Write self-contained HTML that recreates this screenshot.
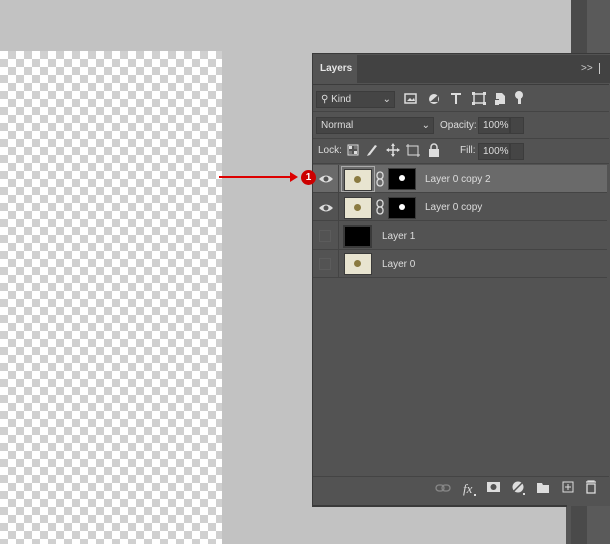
<!DOCTYPE html><html><head><style>
*{margin:0;padding:0;box-sizing:border-box}
body{width:610px;height:544px;background:#c2c2c2;position:relative;overflow:hidden;font-family:"Liberation Sans",sans-serif;font-size:10px;color:#ddd}
.a{position:absolute}
.chk{left:0;top:51px;width:222px;height:493px;background-color:#fff;background-image:linear-gradient(45deg,#d0d0d0 25%,transparent 25%,transparent 75%,#d0d0d0 75%),linear-gradient(45deg,#d0d0d0 25%,transparent 25%,transparent 75%,#d0d0d0 75%);background-size:16px 16px;background-position:0 0,8px 8px}
.panel{left:312px;top:53px;width:298px;height:453px;background:#535353;border-left:1px solid #3a3a3a;border-top:1px solid #3a3a3a}
.field{background:#454545;border:1px solid #3c3c3c;color:#ddd;height:17px;line-height:15px;padding-left:4px}
.row{left:313px;width:294px;height:28px;border-bottom:1px solid #444}
.thumb{width:28px;height:22px;border:1px solid #3a3a3a;background:#e8e4d0}
.thumb::after{content:"";position:absolute;left:9px;top:6px;width:7px;height:7px;border-radius:50%;background:#8a7a40}
.mask{width:28px;height:22px;border:1px solid #3a3a3a;background:#000}
.lbl{color:#ddd;font-size:10px}
</style></head><body>
<div class="a chk"></div>
<div class="a" style="left:571px;top:0;width:16px;height:544px;background:#4a4a4a"></div>
<div class="a" style="left:587px;top:0;width:23px;height:544px;background:#5a5a5a"></div>
<div class="a" style="left:566px;top:505px;width:5px;height:39px;background:#555"></div>
<div class="a panel"></div>
<div class="a" style="left:357px;top:55px;width:253px;height:28px;background:#424242"></div>
<div class="a" style="left:320px;top:63px;font-weight:bold;color:#e6e6e6">Layers</div>
<div class="a" style="left:581px;top:63px;color:#ccc">&gt;&gt;</div>
<div class="a" style="left:599px;top:63px;width:1px;height:11px;background:#ccc"></div>
<div class="a" style="left:313px;top:84px;width:296px;height:1px;background:#3c3c3c"></div>
<div class="a field" style="left:316px;top:91px;width:79px">&#9906; Kind <span style="float:right;padding-right:3px">&#8964;</span></div>
<svg class="a" style="left:400px;top:88px" width="130" height="22" fill="#ddd">
<rect x="5" y="6" width="11" height="9" fill="none" stroke="#ddd" stroke-width="1.5"/><path d="M7 13l3-3 2 2 2-2 1 3z"/>
<circle cx="34" cy="11" r="5"/><path d="M30 14l8-7v7z" fill="#535353"/>
<path d="M51 5h10v2h-4v9h-2V7h-4z"/>
<rect x="74" y="6" width="10" height="9" fill="none" stroke="#ddd" stroke-width="1.5"/><rect x="72" y="4" width="3" height="3"/><rect x="83" y="4" width="3" height="3"/><rect x="72" y="14" width="3" height="3"/><rect x="83" y="14" width="3" height="3"/>
<path d="M96 5h6l3 3v8h-9z"/><rect x="94" y="11" width="5" height="6" fill="#535353"/><rect x="95" y="12" width="4" height="5"/>
<circle cx="119" cy="7" r="4"/><rect x="118" y="10" width="3" height="6"/>
</svg>
<div class="a" style="left:313px;top:111px;width:296px;height:1px;background:#444"></div>
<div class="a field" style="left:316px;top:117px;width:118px">Normal<span style="float:right;padding-right:3px">&#8964;</span></div>
<div class="a" style="left:440px;top:120px">Opacity:</div>
<div class="a field" style="left:478px;top:117px;width:32px">100%</div>
<div class="a field" style="left:510px;top:117px;width:14px"></div>
<div class="a" style="left:313px;top:138px;width:296px;height:1px;background:#444"></div>
<div class="a" style="left:318px;top:145px">Lock:</div>
<svg class="a" style="left:345px;top:142px" width="100" height="16" fill="#ddd">
<rect x="3" y="3" width="10" height="10" fill="none" stroke="#ddd"/><rect x="4" y="4" width="3" height="3"/><rect x="9" y="9" width="3" height="3"/><rect x="9" y="4" width="3" height="3" fill="#777"/><rect x="4" y="9" width="3" height="3" fill="#777"/>
<path d="M22 14l3-1 7-9-2-1-7 9z"/>
<path d="M48 2v12M42 8h12" stroke="#ddd" stroke-width="1.5"/><path d="M48 1l-2 3h4zM48 15l-2-3h4zM41 8l3-2v4zM55 8l-3-2v4z"/>
<path d="M63 4h10v9H63z" fill="none" stroke="#ddd"/><path d="M61 4h3M72 13h3M63 2v3M73 12v3" stroke="#ddd"/>
<rect x="84" y="7" width="10" height="8"/><path d="M86 7V5a3 3 0 016 0v2" fill="none" stroke="#ddd" stroke-width="1.5"/>
</svg>
<div class="a" style="left:460px;top:145px">Fill:</div>
<div class="a field" style="left:478px;top:143px;width:32px">100%</div>
<div class="a field" style="left:510px;top:143px;width:14px"></div>
<div class="a" style="left:313px;top:163px;width:296px;height:1px;background:#444"></div>

<div class="a row" style="top:165px;background:#6a6a6a"></div>
<div class="a row" style="top:193px"></div>
<div class="a row" style="top:222px"></div>
<div class="a row" style="top:250px"></div>
<div class="a" style="left:338px;top:165px;width:1px;height:113px;background:#444"></div>
<div class="a" style="left:219px;top:176px;width:76px;height:2px;background:#d00"></div>
<div class="a" style="left:290px;top:172px;border-left:8px solid #d00;border-top:5px solid transparent;border-bottom:5px solid transparent"></div>
<div class="a" style="left:301px;top:170px;width:15px;height:15px;border-radius:50%;background:#c00;color:#fff;font-size:10px;text-align:center;line-height:15px;font-weight:bold">1</div>
<svg class="a" style="left:318px;top:173px" width="16" height="12"><path d="M1 6q7-7 14 0q-7 7-14 0z" fill="#ddd"/><circle cx="8" cy="6" r="2.5" fill="#535353"/></svg>
<svg class="a" style="left:318px;top:202px" width="16" height="12"><path d="M1 6q7-7 14 0q-7 7-14 0z" fill="#ddd"/><circle cx="8" cy="6" r="2.5" fill="#535353"/></svg>
<div class="a" style="left:319px;top:230px;width:12px;height:12px;border:1px solid #5c5c5c"></div>
<div class="a" style="left:319px;top:258px;width:12px;height:12px;border:1px solid #5c5c5c"></div>
<div class="a" style="left:341px;top:166px;width:34px;height:26px;border:1px solid #aaa"></div>
<div class="a thumb" style="left:344px;top:169px"></div>
<svg class="a" style="left:375px;top:171px" width="10" height="16" fill="none" stroke="#ddd" stroke-width="1.3"><rect x="2" y="1" width="6" height="7" rx="3"/><rect x="2" y="8" width="6" height="7" rx="3"/></svg>
<div class="a mask" style="left:388px;top:168px"></div><div class="a" style="left:399px;top:175px;width:6px;height:6px;border-radius:50%;background:#fff"></div>
<div class="a lbl" style="left:425px;top:174px">Layer 0 copy 2</div>
<div class="a thumb" style="left:344px;top:197px"></div>
<svg class="a" style="left:375px;top:199px" width="10" height="16" fill="none" stroke="#ddd" stroke-width="1.3"><rect x="2" y="1" width="6" height="7" rx="3"/><rect x="2" y="8" width="6" height="7" rx="3"/></svg>
<div class="a mask" style="left:388px;top:197px"></div><div class="a" style="left:399px;top:204px;width:6px;height:6px;border-radius:50%;background:#fff"></div>
<div class="a lbl" style="left:425px;top:202px">Layer 0 copy</div>
<div class="a" style="left:343px;top:225px;width:29px;height:23px;background:#000;border:2px solid #3a3a3a"></div>
<div class="a lbl" style="left:382px;top:231px">Layer 1</div>
<div class="a thumb" style="left:344px;top:253px"></div>
<div class="a lbl" style="left:382px;top:259px">Layer 0</div>

<div class="a" style="left:313px;top:476px;width:296px;height:1px;background:#444"></div>
<div class="a" style="left:312px;top:505px;width:255px;height:2px;background:#3a3a3a"></div>
<svg class="a" style="left:430px;top:478px" width="180" height="22" fill="#ddd">
<rect x="6" y="7" width="8" height="6" rx="3" fill="none" stroke="#888" stroke-width="1.3"/><rect x="12" y="7" width="8" height="6" rx="3" fill="none" stroke="#888" stroke-width="1.3"/>
<text x="33" y="15" font-family="Liberation Serif" font-style="italic" font-size="13" fill="#ddd">fx</text><rect x="44" y="16" width="2" height="2"/>
<rect x="57" y="4" width="13" height="10"/><circle cx="63.5" cy="9" r="3" fill="#535353"/>
<circle cx="88" cy="9" r="5.5"/><path d="M84 13l8-8" stroke="#535353" stroke-width="1.5"/><rect x="93" y="15" width="2" height="2"/>
<path d="M107 5h5l1 2h6v8h-12z"/>
<rect x="133" y="4" width="10" height="10" fill="none" stroke="#ddd"/><path d="M138 6v6M135 9h6" stroke="#ddd"/>
<path d="M156 4h10M158 4v-1h6v1M157 6h8v9h-8z" fill="none" stroke="#ddd" stroke-width="1.3"/>
</svg>
</body></html>
